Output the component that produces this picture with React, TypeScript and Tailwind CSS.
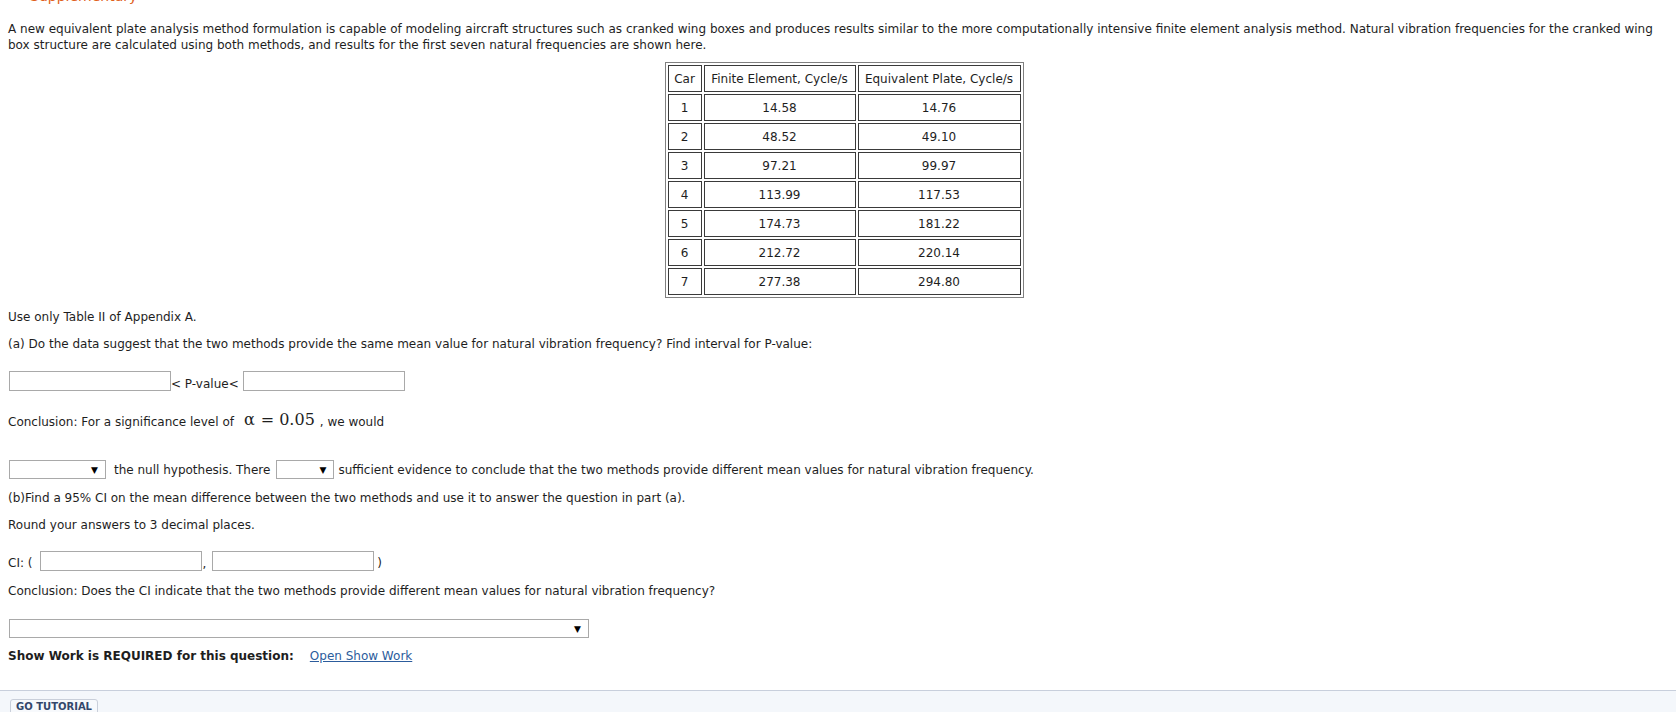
import React from 'react'

const rows: [number, string, string][] = [
  [1, '14.58', '14.76'],
  [2, '48.52', '49.10'],
  [3, '97.21', '99.97'],
  [4, '113.99', '117.53'],
  [5, '174.73', '181.22'],
  [6, '212.72', '220.14'],
  [7, '277.38', '294.80'],
]

const TextBox: React.FC<{ className?: string }> = ({ className = '' }) => (
  <input
    type="text"
    className={`h-[20px] w-[162px] border border-[#a9a9a9] bg-white px-1 text-[12px] outline-none ${className}`}
  />
)

const Select: React.FC<{ width: string }> = ({ width }) => (
  <div className={`relative h-[19px] ${width} border border-[#a9a9a9] bg-white`}>
    <span className="absolute right-[7px] top-[1px] text-[9px] leading-[16px] text-black">▼</span>
  </div>
)

export default function App() {
  return (
    <div className="min-h-[712px] bg-white text-[12px] leading-[16px] text-[#1e1e1e] [font-family:'DejaVu_Sans',Verdana,sans-serif]">
      <div className="h-[4px] overflow-hidden px-[30px]">
        <div className="-mt-[12px] text-[14px] leading-[16px] text-[#e0601c]">Supplementary</div>
      </div>
      <div className="px-2">
        <p className="mt-[17px]">
          A new equivalent plate analysis method formulation is capable of modeling aircraft structures such as cranked wing boxes and produces results similar to the more computationally intensive finite element analysis method. Natural vibration frequencies for the cranked wing box structure are calculated using both methods, and results for the first seven natural frequencies are shown here.
        </p>

        <div className="mt-[9px] flex justify-center pl-[12px]">
          <table className="border-separate border-spacing-[2px] border border-[#808080]">
            <thead>
              <tr>
                <td className="h-[27px] w-[34px] border border-[#3a3a3a] px-[4px] text-center">Car</td>
                <td className="h-[27px] w-[152px] border border-[#3a3a3a] px-[4px] text-center">Finite Element, Cycle/s</td>
                <td className="h-[27px] w-[163px] border border-[#3a3a3a] px-[4px] text-center">Equivalent Plate, Cycle/s</td>
              </tr>
            </thead>
            <tbody>
              {rows.map(([car, fe, ep]) => (
                <tr key={car}>
                  <td className="h-[27px] border border-[#3a3a3a] text-center">{car}</td>
                  <td className="h-[27px] border border-[#3a3a3a] text-center">{fe}</td>
                  <td className="h-[27px] border border-[#3a3a3a] text-center">{ep}</td>
                </tr>
              ))}
            </tbody>
          </table>
        </div>

        <p className="mt-[11px]">Use only Table II of Appendix A.</p>
        <p className="mt-[11px]">
          (a) Do the data suggest that the two methods provide the same mean value for natural vibration frequency? Find interval for P-value:
        </p>

        <div className="mt-[19px] flex items-end">
          <TextBox className="ml-px" />
          <span className="leading-[14px]">&lt; P-value&lt;</span>
          <TextBox className="ml-[4px]" />
        </div>

        <div className="mt-[19px] flex h-[20px] items-end">
          <span>Conclusion: For a significance level of</span>
          <span className="ml-[10px] text-[16px] leading-[20px] [font-family:'DejaVu_Serif',serif]">α</span>
          <span className="ml-[6px] text-[16px] leading-[20px] [font-family:'DejaVu_Serif',serif]">=</span>
          <span className="ml-[5px] text-[16px] leading-[20px] [font-family:'DejaVu_Serif',serif]">0.05</span>
          <span className="ml-[5px]">, we would</span>
        </div>

        <div className="mt-[30px] flex items-center">
          <Select width="w-[97px] ml-px" />
          <span className="ml-[8px]">the null hypothesis. There</span>
          <div className="ml-[6px]">
            <Select width="w-[58px]" />
          </div>
          <span className="ml-[4px]">
            sufficient evidence to conclude that the two methods provide different mean values for natural vibration frequency.
          </span>
        </div>

        <p className="mt-[11px]">(b)Find a 95% CI on the mean difference between the two methods and use it to answer the question in part (a).</p>
        <p className="mt-[11px]">Round your answers to 3 decimal places.</p>

        <div className="mt-[18px] flex items-end">
          <span className="leading-[16px]">CI: (</span>
          <TextBox className="ml-[8px]" />
          <span className="leading-[14px]">,</span>
          <TextBox className="ml-[6px]" />
          <span className="ml-[3px] leading-[16px]">)</span>
        </div>

        <p className="mt-[12px]">Conclusion: Does the CI indicate that the two methods provide different mean values for natural vibration frequency?</p>

        <div className="mt-[20px]">
          <Select width="w-[580px] ml-px" />
        </div>

        <div className="mt-[10px] flex">
          <span className="font-bold">Show Work is REQUIRED for this question:</span>
          <a href="#" className="ml-[16px] text-[#2c5c9c] underline">Open Show Work</a>
        </div>
      </div>

      <div className="mt-[26px] h-[30px] border-t border-[#c8cfdc] bg-[#f4f7fb] px-[10px] pt-[7px]">
        <button className="rounded-[3px] border border-[#c9cfda] bg-[#f7f9fc] px-[5px] text-[10px] font-bold leading-[14px] text-[#33476b]">
          GO TUTORIAL
        </button>
      </div>
    </div>
  )
}
